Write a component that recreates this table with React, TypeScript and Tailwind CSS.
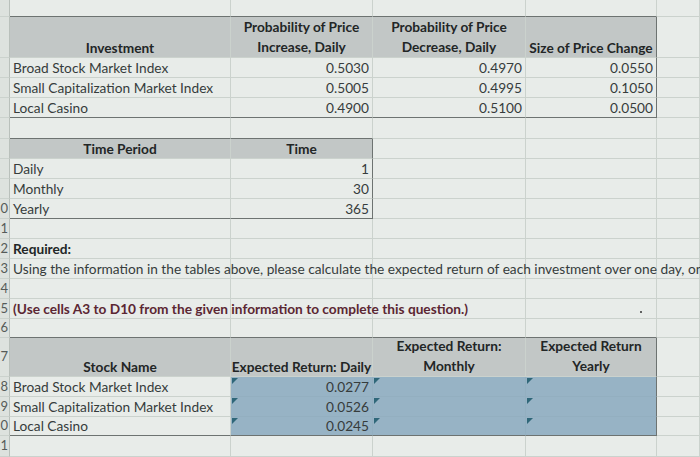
import React from "react";

type Cell = {
  t?: string;
  lines?: string[];
  al?: "l" | "c" | "r";
  b?: boolean;
  bg?: "h" | "blue";
  tri?: boolean;
  red?: boolean;
  dot?: boolean;
  spill?: boolean;
};

const widths = [10, 221, 142, 153, 131, 43];
const heights = [17, 41, 20, 20, 20, 21, 20, 20, 20, 20, 20, 20, 20, 20, 20, 19, 39, 20, 20, 19, 21];

const tables = [
  { r0: 2, r1: 5, c0: 1, c1: 4 },
  { r0: 7, r1: 10, c0: 1, c1: 2 },
  { r0: 17, r1: 20, c0: 1, c1: 4 },
];

const H = (t: string): Cell => ({ t, al: "c", b: true, bg: "h" });
const HL = (a: string, b: string): Cell => ({ lines: [a, b], al: "c", b: true, bg: "h" });
const L = (t: string): Cell => ({ t, al: "l" });
const R = (t: string): Cell => ({ t, al: "r" });
const BR = (t: string): Cell => ({ t, al: "r", bg: "blue", tri: true });
const BE: Cell = { bg: "blue", tri: true };

const rows: Record<number, Cell[]> = {
  2: [H("Investment"), HL("Probability of Price", "Increase, Daily"), HL("Probability of Price", "Decrease, Daily"), H("Size of Price Change")],
  3: [L("Broad Stock Market Index"), R("0.5030"), R("0.4970"), R("0.0550")],
  4: [L("Small Capitalization Market Index"), R("0.5005"), R("0.4995"), R("0.1050")],
  5: [L("Local Casino"), R("0.4900"), R("0.5100"), R("0.0500")],
  7: [H("Time Period"), H("Time")],
  8: [L("Daily"), R("1")],
  9: [L("Monthly"), R("30")],
  10: [L("Yearly"), R("365")],
  12: [{ t: "Required:", al: "l", b: true, spill: true }],
  13: [{ t: "Using the information in the tables above, please calculate the expected return of each investment over one day, one month, and one year.", al: "l", spill: true }],
  15: [{ t: "(Use cells A3 to D10 from the given information to complete this question.)", al: "l", b: true, red: true, spill: true }, {}, {}, { dot: true }],
  17: [H("Stock Name"), H("Expected Return: Daily"), HL("Expected Return:", "Monthly"), HL("Expected Return", "Yearly")],
  18: [L("Broad Stock Market Index"), BR("0.0277"), BE, BE],
  19: [L("Small Capitalization Market Index"), BR("0.0526"), BE, BE],
  20: [L("Local Casino"), BR("0.0245"), BE, BE],
};

function darkRight(r: number, c: number) {
  return tables.some((t) => r >= t.r0 && r <= t.r1 && (c === t.c1 || c + 1 === t.c0));
}
function darkBottom(r: number, c: number) {
  return tables.some((t) => c >= t.c0 && c <= t.c1 && (r === t.r1 || r + 1 === t.r0));
}

function CellView({ r, c, cell }: { r: number; c: number; cell: Cell }) {
  const dr = darkRight(r, c);
  const db = darkBottom(r, c);
  const blue = cell.bg === "blue";
  const bg = cell.bg === "h" ? "bg-[#c2c7c6]" : blue ? "bg-[#97b3c5]" : "bg-[#e8ece9]";
  const br = dr ? "border-r-[#6d7371]" : blue ? "border-r-[#93afc0]" : "border-r-[#cbd2cd]";
  const bb = db ? "border-b-[#6d7371]" : blue ? "border-b-[#93afc0]" : "border-b-[#cbd2cd]";
  const justify = cell.al === "r" ? "justify-end text-right pr-[3px]" : cell.al === "c" ? "justify-center text-center" : "justify-start text-left pl-[3px]";
  const color = cell.red ? "text-[#5b2733]" : cell.b ? "text-[#222626]" : "text-[#363c3c]";
  const pos = cell.spill ? "relative z-10" : cell.tri ? "relative" : "";
  return (
    <div
      className={`flex shrink-0 items-end border-r border-b ${pos} ${bg} ${br} ${bb} ${justify} ${color} ${cell.b ? "font-bold" : "font-normal"}`}
      style={{ width: widths[c], height: heights[r - 1] }}
    >
      {cell.tri && (
        <div className="absolute left-[1px] top-[1px] h-0 w-0 border-t-[6px] border-r-[6px] border-t-[#2f6779] border-r-transparent" />
      )}
      {cell.lines ? (
        <div className="flex flex-col items-center leading-[20px]">
          <span className="whitespace-nowrap">{cell.lines[0]}</span>
          <span className="whitespace-nowrap">{cell.lines[1]}</span>
        </div>
      ) : cell.t ? (
        <span className="whitespace-nowrap leading-[18px]">{cell.t}</span>
      ) : null}
      {cell.dot && <span className="mb-[5px] ml-auto mr-[14px] h-[2px] w-[2px] rounded-full bg-[#333]" />}
    </div>
  );
}

export default function App() {
  return (
    <div
      className="h-[457px] w-[700px] overflow-hidden bg-[#e8ece9] text-[13.7px]"
      style={{ fontFamily: "Lato, 'Open Sans', sans-serif" }}
    >
      {heights.map((h, i) => {
        const r = i + 1;
        const data = rows[r] || [];
        const showNum = r >= 10;
        return (
          <div key={r} className="flex">
            <div
              className="flex shrink-0 items-center justify-end overflow-hidden border-r border-b border-r-[#b9c0bb] border-b-[#cbd2cd] bg-[#dde2de] pr-[1px] text-[13px] text-[#555b59]"
              style={{ width: widths[0], height: h }}
            >
              {showNum ? String(r % 10) : ""}
            </div>
            {[1, 2, 3, 4, 5].map((c) => (
              <CellView key={c} r={r} c={c} cell={data[c - 1] || {}} />
            ))}
          </div>
        );
      })}
    </div>
  );
}
